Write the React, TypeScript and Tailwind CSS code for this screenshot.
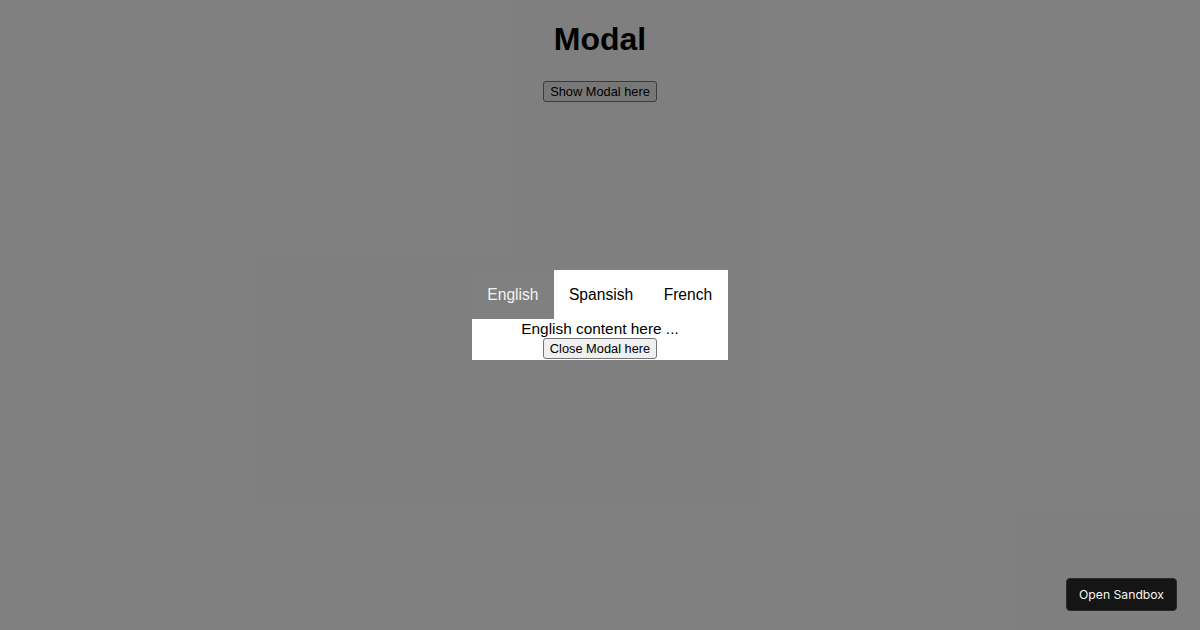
export default function App() {
  const tabs = ["English", "Spansish", "French"];
  const active = 0;

  return (
    <div className="relative h-[630px] w-full overflow-hidden bg-white font-['Liberation_Sans',Arial,sans-serif] text-black">
      <div className="flex flex-col items-center">
        <h1 className="mt-[21px] text-[32px] font-bold leading-[37px]">Modal</h1>
        <button className="mt-[23px] rounded-[3px] border border-[#767676] bg-[#efefef] px-[6px] py-[1px] text-[12.8px] leading-[17px]">
          Show Modal here
        </button>
      </div>

      {/* overlay */}
      <div className="absolute inset-0 flex items-center justify-center bg-black/50">
        <div className="flex flex-col bg-white">
          <div className="flex">
            {tabs.map((t, i) => (
              <div
                key={t}
                className={
                  i === active
                    ? "bg-[#808080] py-[15px] pl-[15px] pr-[15.5px] text-[15.6px] leading-[19px] text-[#f2f2f2]"
                    : "bg-white py-[15px] pl-[15px] pr-[15.5px] text-[15.6px] leading-[19px] text-black"
                }
              >
                {t}
              </div>
            ))}
          </div>
          <div className="flex flex-col items-center pb-px">
            <p className="text-[15.4px] leading-[19px]">English content here ...</p>
            <button className="rounded-[3px] border border-[#767676] bg-[#efefef] px-[6px] py-[1px] text-[12.8px] leading-[17px]">
              Close Modal here
            </button>
          </div>
        </div>
      </div>

      <button className="absolute bottom-[19px] right-[23px] rounded-[4px] border border-[#2a2a2a] bg-[#151515] px-[12px] py-[7px] font-['Inter',sans-serif] text-[12.2px] leading-[17px] text-[#f5f5f5]">
        Open Sandbox
      </button>
    </div>
  );
}
